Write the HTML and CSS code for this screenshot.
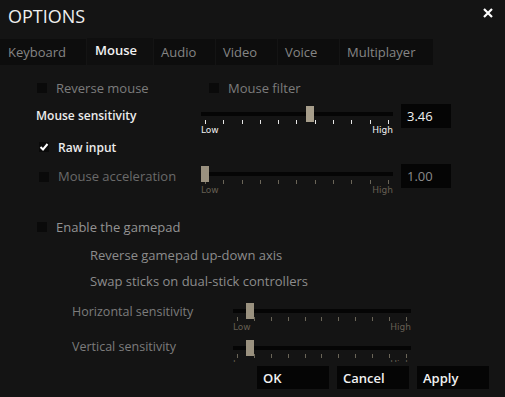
FILE: index.html
```html
<!DOCTYPE html>
<html lang="en">
<head>
  <meta charset="UTF-8" />
  <title>Options</title>
  <link rel="stylesheet" href="styles.css">
</head>
<body>
  <div class="titlebar">
    <h1 class="title">OPTIONS</h1>
    <span class="close">
      <svg width="10" height="10" viewBox="0 0 10 10"><path d="M1 1L9 9M9 1L1 9" stroke="#fff" stroke-width="2.2" /></svg>
    </span>
  </div>

  <div class="tabs">
    <span class="tab">Keyboard</span>
    <span class="tab active">Mouse</span>
    <span class="tab">Audio</span>
    <span class="tab">Video</span>
    <span class="tab">Voice</span>
    <span class="tab">Multiplayer</span>
  </div>

  <div class="panel">
    <div class="row row-pair">
      <label class="check dim"><span class="box"></span>Reverse mouse</label>
      <label class="check dim"><span class="box"></span>Mouse filter</label>
    </div>

    <div class="row row-slider row-sens">
      <span class="label bright">Mouse sensitivity</span>
      <div class="slider wide">
        <div class="track"></div>
        <div class="thumb" style="left: 105px"></div>
        <div class="ticks"><i></i><i></i><i></i><i></i><i></i><i></i><i></i><i></i><i></i><i></i><i></i></div>
        <div class="ends"><span>Low</span><span>High</span></div>
      </div>
      <div class="value">3.46</div>
    </div>

    <div class="row row-raw">
      <label class="check bright"><span class="box checked"><svg width="10" height="10" viewBox="0 0 10 10"><path d="M1.5 5L4 7.5L8.5 2" stroke="#fff" stroke-width="2" fill="none" /></svg></span>Raw input</label>
    </div>

    <div class="row row-slider row-accel">
      <label class="check off"><span class="box"></span>Mouse acceleration</label>
      <div class="slider wide disabled">
        <div class="track"></div>
        <div class="thumb" style="left: 0px"></div>
        <div class="ticks"><i></i><i></i><i></i><i></i><i></i><i></i><i></i><i></i><i></i><i></i><i></i></div>
        <div class="ends"><span>Low</span><span>High</span></div>
      </div>
      <div class="value muted">1.00</div>
    </div>

    <div class="row row-gamepad">
      <label class="check light"><span class="box"></span>Enable the gamepad</label>
    </div>

    <div class="row row-sub first">Reverse gamepad up-down axis</div>
    <div class="row row-sub">Swap sticks on dual-stick controllers</div>

    <div class="row row-slider row-axis">
      <span class="label dim">Horizontal sensitivity</span>
      <div class="slider narrow disabled">
        <div class="track"></div>
        <div class="thumb" style="left: 13px"></div>
        <div class="ticks"><i></i><i></i><i></i><i></i><i></i><i></i><i></i><i></i><i></i><i></i><i></i></div>
        <div class="ends"><span>Low</span><span>High</span></div>
      </div>
    </div>

    <div class="row row-slider row-axis second">
      <span class="label dim">Vertical sensitivity</span>
      <div class="slider narrow disabled">
        <div class="track"></div>
        <div class="thumb" style="left: 13px"></div>
        <div class="ticks"><i></i><i></i><i></i><i></i><i></i><i></i><i></i><i></i><i></i><i></i><i></i></div>
        <div class="ends"><span>Low</span><span>High</span></div>
      </div>
    </div>
  </div>

  <div class="actions">
    <button>OK</button>
    <button>Cancel</button>
    <button>Apply</button>
  </div>
</body>
</html>
```

FILE: styles.css
```css
body {
  margin: 0;
  background: #141414;
  font-family: "Open Sans", sans-serif;
  font-size: 13px;
  color: #8a8a8a;
  width: 505px;
  height: 397px;
  overflow: hidden;
}
.titlebar {
  display: flex;
  justify-content: space-between;
  align-items: flex-start;
  height: 38px;
  box-sizing: border-box;
  padding: 5px 12px 0 8px;
}
.title {
  margin: 0;
  font-size: 18px;
  font-weight: 500;
  line-height: 22px;
  color: #f0f0f0;
}
.close {
  display: block;
  margin-top: 3px;
  height: 10px;
}
.close svg {
  display: block;
}
.tabs {
  display: flex;
  align-items: flex-end;
  gap: 1px;
  height: 27px;
}
.tab {
  height: 26px;
  line-height: 26px;
  padding: 0 8px;
  box-sizing: border-box;
  background: #0d0d0d;
  font-size: 13px;
  color: #858585;
}
.tab:nth-child(1) { width: 86px; }
.tab:nth-child(2) { width: 66px; }
.tab:nth-child(3),
.tab:nth-child(4),
.tab:nth-child(5) { width: 61px; padding-left: 7px; }
.tab:nth-child(6) { width: 93px; padding-left: 7px; }
.tab.active {
  height: 27px;
  line-height: 24px;
  color: #f2f2f2;
  font-weight: 600;
  background: #0f0f0f;
}
.panel {
  height: 297px;
  overflow: hidden;
  padding-top: 13px;
  box-sizing: border-box;
}
.row {
  display: flex;
  align-items: center;
}
.check {
  display: flex;
  align-items: center;
  gap: 9px;
  height: 20px;
}
.box {
  display: block;
  width: 10px;
  height: 10px;
  background: #0a0a0a;
}
.box svg {
  display: block;
}
.dim { color: #7c7c7c; }
.light { color: #939393; }
.off { color: #6a6a6a; }
.bright { color: #ececec; font-weight: 600; font-size: 12px; }
.row-pair {
  margin-left: 37px;
  height: 20px;
}
.row-pair .check:first-child {
  width: 172px;
}
.row-slider {
  align-items: flex-start;
  height: 30px;
}
.row-sens {
  margin: 6px 0 0 36px;
}
.row-sens .label {
  width: 165px;
  line-height: 24px;
}
.row-raw {
  margin: 3px 0 0 39px;
}
.row-accel {
  margin: 7px 0 0 39px;
}
.row-accel .check {
  width: 162px;
  height: 24px;
}
.row-accel .check .box {
  margin-top: 2px;
}
.slider {
  position: relative;
  height: 30px;
  margin-top: 2px;
}
.slider.wide { width: 192px; }
.slider.narrow { width: 178px; margin-top: 0; }
.track {
  margin-top: 6px;
  height: 4px;
  background: #050505;
}
.thumb {
  position: absolute;
  top: 0;
  width: 8px;
  height: 16px;
  background: #a79e8b;
}
.disabled .thumb {
  background: #9a917f;
}
.ticks {
  display: flex;
  justify-content: space-between;
  padding: 0 4px;
  margin-top: 4px;
  height: 4px;
}
.ticks i {
  display: block;
  width: 1px;
  height: 4px;
  background: #e8e8e8;
}
.disabled .ticks i {
  background: #6a6558;
}
.ends {
  display: flex;
  justify-content: space-between;
  margin-top: 1px;
  font-family: "DejaVu Sans", sans-serif;
  font-size: 9px;
  line-height: 11px;
  color: #f0f0f0;
}
.disabled .ends {
  color: #655f53;
}
.value {
  width: 50px;
  height: 24px;
  margin-left: 8px;
  padding-left: 6px;
  box-sizing: border-box;
  background: #050505;
  color: #f0f0f0;
  font-size: 13px;
  line-height: 24px;
}
.value.muted {
  color: #8a8a8a;
}
.row-gamepad {
  margin: 23px 0 0 37px;
}
.row-sub {
  margin: 6px 0 0 90px;
  height: 20px;
  color: #8c8c8c;
}
.row-sub.first {
  margin-top: 8px;
}
.row-axis {
  margin: 12px 0 0 72px;
}
.row-axis.second {
  margin-top: 7px;
}
.row-axis .label {
  width: 161px;
  line-height: 18px;
  font-size: 12.5px;
}
.row-axis.second .label {
  line-height: 14px;
}
.actions {
  display: flex;
  justify-content: flex-end;
  gap: 8px;
  padding: 4px 16px 0 0;
}
.actions button {
  width: 72px;
  height: 23px;
  padding: 0 6px;
  border: none;
  background: #050505;
  color: #f2f2f2;
  font-family: "Open Sans", sans-serif;
  font-size: 13px;
  font-weight: 600;
  text-align: left;
}
```
